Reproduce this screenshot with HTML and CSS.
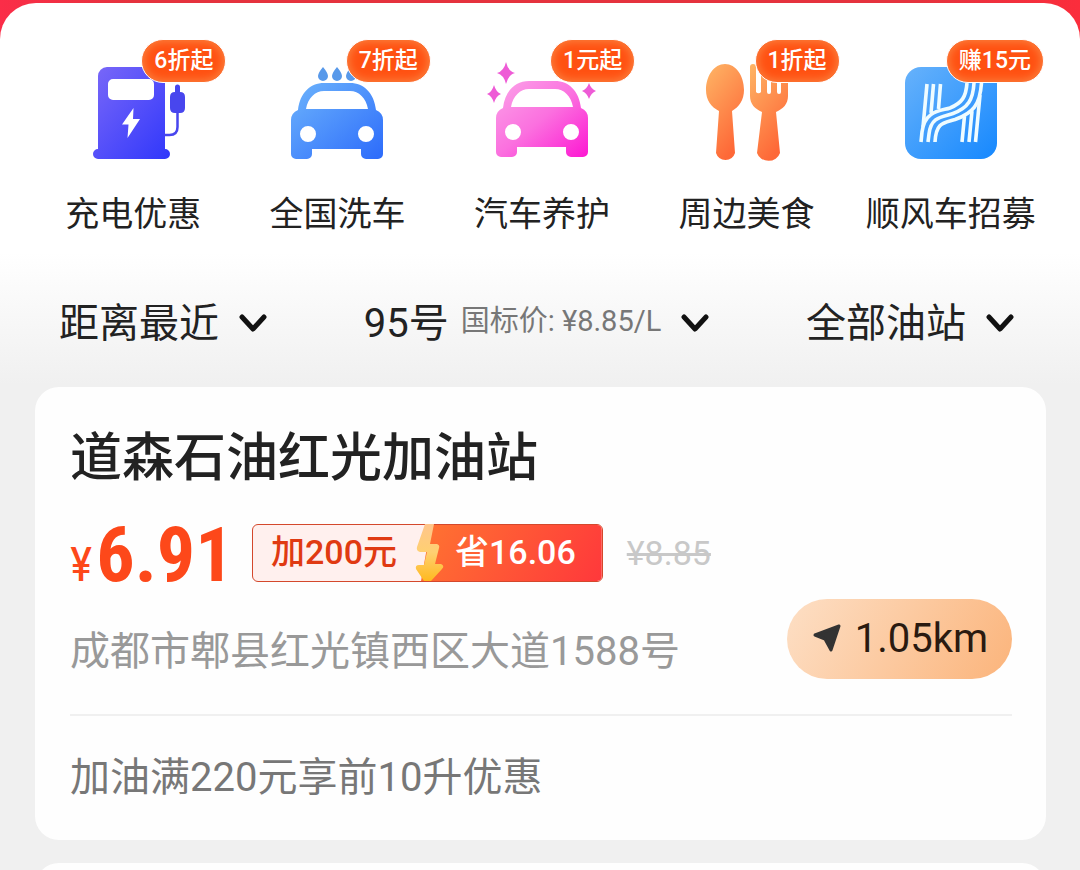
FILE: index.html
```html
<!DOCTYPE html>
<html lang="zh-CN">
<head>
  <meta charset="UTF-8">
  <title>加油优惠</title>
  <meta name="viewport" content="width=device-width, initial-scale=1.0">
  <link rel="stylesheet" href="styles.css">
</head>
<body>
  <main class="sheet">
    <nav class="services">
      <a class="service" href="#charge">
        <svg class="service-icon" viewBox="0 0 120 110" aria-hidden="true">
          <defs><linearGradient id="violet" x1="0" y1="0" x2="1" y2="1"><stop offset="0" stop-color="#7a68f8"/><stop offset="1" stop-color="#3037fb"/></linearGradient></defs>
          <path fill="url(#violet)" fill-rule="evenodd" d="M34 12H83a9 9 0 0 1 9 9V94a5 5 0 0 1 0 10H25a5 5 0 0 1 0-10V21a9 9 0 0 1 9-9zM40 24a5 5 0 0 0-5 5V40a5 5 0 0 0 5 5H76a5 5 0 0 0 5-5V29a5 5 0 0 0-5-5z"/>
          <path fill="#fff" d="M60.500 53L49 69.500H55.500L54.500 83L67 64H60z"/>
          <path fill="#4846ee" d="M102 32a2.500 2.500 0 0 1 5 0v5q5 0 5 5v11q0 5-5 5h-5q-5 0-5-5V42q0-5 5-5z"/>
          <path fill="none" stroke="#4846ee" stroke-width="2.500" d="M104.500 57V72q0 8-8 8H91"/>
        </svg>
        <span class="badge">6折起</span>
        <span class="service-name">充电优惠</span>
      </a>
      <a class="service" href="#wash">
        <svg class="service-icon" viewBox="0 0 120 110" aria-hidden="true">
          <defs><linearGradient id="blue" x1="0" y1="0" x2="1" y2="1"><stop offset="0" stop-color="#6db4fc"/><stop offset="1" stop-color="#2c6bfb"/></linearGradient></defs>
          <path fill="#5899ea" d="M45 12q5 6 5 9a5 5 0 0 1-10 0q0-3 5-9zM59 12q5 6 5 9a5 5 0 0 1-10 0q0-3 5-9zM73 12q5 6 5 9a5 5 0 0 1-10 0q0-3 5-9z"/>
          <path fill="url(#blue)" fill-rule="evenodd" d="M20 55C22 38 32 28 46 28H72C86 28 96 38 98 55Q105 58 105 65V99a5 5 0 0 1-5 5H88a5 5 0 0 1-5-5V94H34V99a5 5 0 0 1-5 5H18a5 5 0 0 1-5-5V65Q13 58 20 55zM28 54H90C88 43 81 36 72 36H46C37 36 30 43 28 54zM22 79a8 8 0 1 0 16 0a8 8 0 1 0-16 0zM80 79a8 8 0 1 0 16 0a8 8 0 1 0-16 0z"/>
        </svg>
        <span class="badge">7折起</span>
        <span class="service-name">全国洗车</span>
      </a>
      <a class="service" href="#care">
        <svg class="service-icon" viewBox="0 0 120 110" aria-hidden="true">
          <defs><linearGradient id="pink" x1="0" y1="0" x2="1" y2="1"><stop offset="0" stop-color="#fba3e8"/><stop offset="0.500" stop-color="#fb70df"/><stop offset="1" stop-color="#fd17d2"/></linearGradient></defs>
          <path fill="#ee5bd6" d="M24 7Q26 16 33 18Q26 20 24 29Q22 20 15 18Q22 16 24 7zM12 30Q14 37 19 39Q14 41 12 48Q10 41 5 39Q10 37 12 30zM107 28Q109 34 114 36Q109 38 107 44Q105 38 100 36Q105 34 107 28z"/>
          <path fill="url(#pink)" fill-rule="evenodd" transform="translate(1 -2)" d="M20 55C22 38 32 28 46 28H72C86 28 96 38 98 55Q105 58 105 65V99a5 5 0 0 1-5 5H88a5 5 0 0 1-5-5V94H34V99a5 5 0 0 1-5 5H18a5 5 0 0 1-5-5V65Q13 58 20 55zM28 54H90C88 43 81 36 72 36H46C37 36 30 43 28 54zM22 79a8 8 0 1 0 16 0a8 8 0 1 0-16 0zM80 79a8 8 0 1 0 16 0a8 8 0 1 0-16 0z"/>
        </svg>
        <span class="badge">1元起</span>
        <span class="service-name">汽车养护</span>
      </a>
      <a class="service" href="#food">
        <svg class="service-icon" viewBox="0 0 120 110" aria-hidden="true">
          <defs><linearGradient id="orange" x1="0" y1="0" x2="0.500" y2="1"><stop offset="0" stop-color="#feb666"/><stop offset="1" stop-color="#fe6837"/></linearGradient></defs>
          <path fill="url(#orange)" d="M39 9C50 9 58 21 58 35C58 45 53 52 46 56L49 98a10 10 0 0 1-19 0L33 56C25 52 20 45 20 35C20 21 28 9 39 9z"/>
          <path fill="url(#orange)" d="M67 9a3 3 0 0 1 3 3V37a3 3 0 0 0 5 0V12a3 3 0 0 1 6 0V37a2 2 0 0 0 4 0V12a3 3 0 0 1 6 0V37a2 2 0 0 0 4 0V12a3 3 0 0 1 7 0V41C102 49 97 54 90 57L94 98a12 11 0 0 1-23 0L76 57C69 54 64 49 64 41V12a3 3 0 0 1 3-3z"/>
        </svg>
        <span class="badge">1折起</span>
        <span class="service-name">周边美食</span>
      </a>
      <a class="service" href="#ride">
        <svg class="service-icon" viewBox="0 0 120 110" aria-hidden="true">
          <defs><linearGradient id="sky" x1="0" y1="0" x2="1" y2="1"><stop offset="0" stop-color="#67b2fb"/><stop offset="1" stop-color="#1688fe"/></linearGradient></defs>
          <rect x="14" y="12" width="92" height="92" rx="16" fill="url(#sky)"/>
          <g fill="none" stroke="#effcff" stroke-width="3.600">
            <path d="M30 87L31 77C34 55 50 56 59 53C71 48 75 42 76 28"/>
            <path d="M37 87L38 79C40 61 52 62 62 58.500C77 53 82 45 83 28"/>
            <path d="M44 87C45 67 53 68 64 64.500C82 58 89 50 90.500 28"/>
            <path d="M36 29L32 72M42.500 29L40 58M49.500 29L47.500 54M71 87L73.500 61M78 87L81 56M84.500 87L89 40"/>
          </g>
        </svg>
        <span class="badge">赚15元</span>
        <span class="service-name">顺风车招募</span>
      </a>
    </nav>

    <form class="filters">
      <label class="filter">
        <select class="filter-select" aria-label="排序"><option>距离最近</option></select>
        <svg class="chevron" viewBox="0 0 28 20" aria-hidden="true"><path d="M3 4L14 16L25 4"/></svg>
      </label>
      <label class="filter">
        <select class="filter-select" aria-label="油号"><option>95号</option></select>
        <span class="filter-note">国标价: ¥8.85/L</span>
        <svg class="chevron" viewBox="0 0 28 20" aria-hidden="true"><path d="M3 4L14 16L25 4"/></svg>
      </label>
      <label class="filter">
        <select class="filter-select" aria-label="油站"><option>全部油站</option></select>
        <svg class="chevron" viewBox="0 0 28 20" aria-hidden="true"><path d="M3 4L14 16L25 4"/></svg>
      </label>
    </form>

    <div class="stations">
      <article class="station">
        <h2 class="station-name">道森石油红光加油站</h2>
        <div class="price-row">
          <div class="price"><span class="yen">¥</span>6.91</div>
          <div class="coupon">
            <span class="coupon-spend">加200元</span>
            <span class="coupon-save">省16.06</span>
            <svg class="coupon-bolt" viewBox="0 0 30 58" aria-hidden="true">
              <defs><linearGradient id="gold" x1="0" y1="0" x2="0" y2="1"><stop offset="0" stop-color="#ffc58b"/><stop offset="0.500" stop-color="#ffd071"/><stop offset="1" stop-color="#ffb91f"/></linearGradient></defs>
              <path fill="url(#gold)" d="M10 0H19L15 20H22Q25 21 24 24L20 40H26Q30 42 27 45L16 57H9L1 45Q0 41 4 41H9L12 28H5Q1 27 2 23z"/>
            </svg>
          </div>
          <del class="old-price">¥8.85</del>
        </div>
        <div class="place-row">
          <address class="address">成都市郫县红光镇西区大道1588号</address>
          <button class="distance" type="button">
            <svg class="arrow" viewBox="0 0 28 28" aria-hidden="true"><path d="M2 11L26 2L18 26L12 15z"/></svg>
            1.05km
          </button>
        </div>
        <p class="promo">加油满220元享前10升优惠</p>
      </article>
      <article class="station"></article>
    </div>
  </main>
</body>
</html>
```
FILE: styles.css
```css
* { box-sizing: border-box; }
body {
  margin: 0; padding-top: 3px; height: 100vh;
  display: flex; flex-direction: column;
  background: linear-gradient(90deg, #fb2d48, #e5323e 12%, #e5323e 85%, #fb2d3c);
  color: #222; font-family: Roboto, 'Noto Sans CJK SC', sans-serif;
}
.sheet {
  flex: 1; min-height: 0;
  display: flex; flex-direction: column;
  border-radius: 36px 36px 0 0;
  background: linear-gradient(#fff 250px, #f0f0f0 382px);
}

/* services */
.services {
  display: grid; grid-template-columns: repeat(5, 1fr);
  padding: 52px 27px 0 31px;
}
.service {
  position: relative;
  display: flex; flex-direction: column; align-items: center;
  color: #222; text-decoration: none;
}
.service-icon { width: 120px; height: 110px; }
.service-name { margin-top: 25px; font-size: 34px; line-height: 48px; white-space: nowrap; }
.badge {
  position: absolute; top: -16px; right: 9px;
  height: 44px; padding: 0 12px;
  border: 1px solid #fff; border-radius: 22px;
  background: #ff5112; box-shadow: inset 0 0 9px 2px #fb803e;
  color: #fff; font-size: 23px; font-weight: 500; line-height: 42px;
}

/* filters */
.filters {
  display: flex; justify-content: space-between;
  padding: 55px 66px 34px 59px;
}
.filter { display: flex; align-items: center; height: 60px; }
.filter-select {
  appearance: none; padding: 2px 0 0; border: 0; background: none;
  color: #222; font-family: inherit; font-size: 40px; line-height: 60px;
}
.filter-note { margin-left: 12px; padding-bottom: 4px; color: #777; font-size: 29px; line-height: 40px; }
.chevron {
  width: 28px; height: 20px; margin-left: 20px;
  fill: none; stroke: #111; stroke-width: 5; stroke-linecap: round; stroke-linejoin: round;
}

/* stations */
.stations {
  flex: 1; min-height: 0; overflow-y: auto; scrollbar-width: none;
  padding: 0 34px 0 35px;
}
.station {
  min-height: 200px; margin-bottom: 23px; padding: 37px 34px 0 35px;
  border-radius: 24px; background: #fefefe;
}
.station-name { margin: 0; font-size: 52px; font-weight: 500; line-height: 70px; }
.price-row { display: flex; align-items: center; height: 58px; margin-top: 30px; }
.price {
  display: flex; align-items: baseline; width: 152px; padding-top: 14px;
  color: #fd481a; font-family: 'Roboto Condensed', 'Liberation Sans', sans-serif;
  font-size: 76px; font-weight: 700; line-height: 58px;
}
.yen { margin-right: 4px; font-size: 48px; font-weight: 400; }
.coupon {
  position: relative; display: flex; height: 58px; margin-left: 30px;
  border: 1px solid #d4482c; border-radius: 6px; background: #fff0ee;
  font-size: 34px; font-weight: 500; line-height: 54px;
}
.coupon-spend { width: 168px; padding-left: 18px; color: #e03a12; }
.coupon-save {
  padding: 0 26px 0 34px; border-radius: 0 5px 5px 0;
  background: linear-gradient(120deg, #ff7431, #ff383b); color: #fff;
  clip-path: polygon(10px 0, 100% 0, 100% 100%, 0 100%);
}
.coupon-bolt { position: absolute; top: -1px; left: 162px; width: 30px; height: 58px; }
.old-price { margin-left: 24px; color: #c8c8c8; font-size: 34px; }
.place-row {
  display: flex; justify-content: space-between; align-items: flex-end;
  margin-top: 17px; padding-bottom: 35px; border-bottom: 2px solid #f0f0f0;
}
.address { color: #999; font-size: 40px; font-style: normal; line-height: 54px; }
.distance {
  display: flex; align-items: center; gap: 14px;
  height: 80px; padding: 0 24px 2px 26px;
  border: 0; border-radius: 40px;
  background: linear-gradient(120deg, #fddfc5, #fbb47b);
  color: #2a1a10; font-family: inherit; font-size: 40px;
}
.arrow { width: 28px; height: 28px; fill: #333; stroke: #333; stroke-width: 3; stroke-linejoin: round; }
.promo { margin: 0; padding: 32px 0; color: #777; font-size: 40px; line-height: 60px; }
```
